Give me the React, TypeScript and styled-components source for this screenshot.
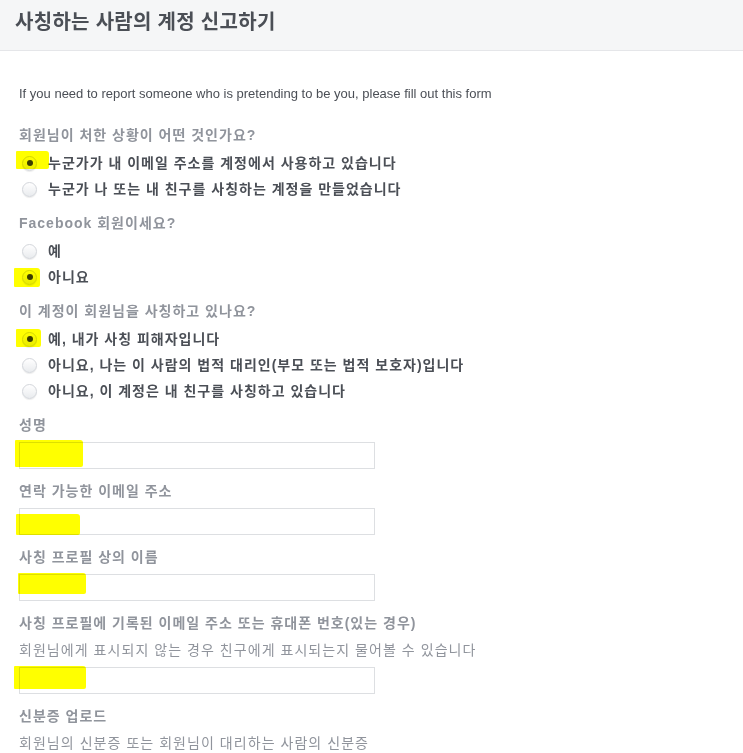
import React from 'react';
import styled, { createGlobalStyle } from 'styled-components';

const GlobalStyle = createGlobalStyle`
    html, body {
        margin: 0;
        padding: 0;
        background: #ffffff;
    }
    body {
        font-family: "Liberation Sans", "Noto Sans CJK KR", sans-serif;
        color: #4b4f56;
    }
`;

type Mark = { left: number; top: number; width: number; height: number };

type Choice = { text: string; checked?: boolean; mark?: Mark };

type Question = { title: string; choices: Choice[] };

type Field = { label: string; hint?: string; mark?: Mark };

const questions: Question[] = [
    {
        title: '회원님이 처한 상황이 어떤 것인가요?',
        choices: [
            { text: '누군가가 내 이메일 주소를 계정에서 사용하고 있습니다', checked: true, mark: { left: -3, top: 1, width: 33, height: 18 } },
            { text: '누군가 나 또는 내 친구를 사칭하는 계정을 만들었습니다' },
        ],
    },
    {
        title: 'Facebook 회원이세요?',
        choices: [
            { text: '예' },
            { text: '아니요', checked: true, mark: { left: -5, top: 4, width: 26, height: 19 } },
        ],
    },
    {
        title: '이 계정이 회원님을 사칭하고 있나요?',
        choices: [
            { text: '예, 내가 사칭 피해자입니다', checked: true, mark: { left: -3, top: 3, width: 25, height: 18 } },
            { text: '아니요, 나는 이 사람의 법적 대리인(부모 또는 법적 보호자)입니다' },
            { text: '아니요, 이 계정은 내 친구를 사칭하고 있습니다' },
        ],
    },
];

const fields: Field[] = [
    { label: '성명', mark: { left: -4, top: -2, width: 68, height: 27 } },
    { label: '연락 가능한 이메일 주소', mark: { left: -3, top: 6, width: 64, height: 21 } },
    { label: '사칭 프로필 상의 이름', mark: { left: -1, top: -1, width: 68, height: 21 } },
    {
        label: '사칭 프로필에 기록된 이메일 주소 또는 휴대폰 번호(있는 경우)',
        hint: '회원님에게 표시되지 않는 경우 친구에게 표시되는지 물어볼 수 있습니다',
        mark: { left: -5, top: -1, width: 72, height: 23 },
    },
];

const Highlight = ({ mark }: { mark?: Mark }) =>
    mark ? <Marker $left={mark.left} $top={mark.top} $width={mark.width} $height={mark.height} /> : null;

export default function App() {
    return (
        <Page>
            <GlobalStyle />
            <Header>
                <Title>사칭하는 사람의 계정 신고하기</Title>
            </Header>
            <Body>
                <Intro>If you need to report someone who is pretending to be you, please fill out this form</Intro>
                {questions.map((q) => (
                    <Group key={q.title}>
                        <Label>{q.title}</Label>
                        <Options>
                            {q.choices.map((c) => (
                                <OptionRow key={c.text}>
                                    <Radio $checked={!!c.checked} />
                                    <OptionText>{c.text}</OptionText>
                                    <Highlight mark={c.mark} />
                                </OptionRow>
                            ))}
                        </Options>
                    </Group>
                ))}
                {fields.map((f) => (
                    <FieldBlock key={f.label}>
                        <Label>{f.label}</Label>
                        {f.hint && <Hint>{f.hint}</Hint>}
                        <InputWrap>
                            <TextInput type="text" />
                            <Highlight mark={f.mark} />
                        </InputWrap>
                    </FieldBlock>
                ))}
                <FieldBlock>
                    <Label>신분증 업로드</Label>
                    <Hint>회원님의 신분증 또는 회원님이 대리하는 사람의 신분증</Hint>
                </FieldBlock>
            </Body>
        </Page>
    );
}

const Page = styled.div`
    width: 743px;
    min-height: 753px;
    overflow: hidden;
`;

const Header = styled.header`
    height: 51px;
    box-sizing: border-box;
    padding: 8px 0 0 15px;
    background: #f5f6f7;
    border-bottom: 1px solid #e5e6e9;
`;

const Title = styled.h1`
    margin: 0;
    font-size: 20px;
    line-height: 28px;
    font-weight: 700;
    color: #4b4f56;
    letter-spacing: 0.3px;
`;

const Body = styled.main`
    display: flex;
    flex-direction: column;
    padding: 35px 0 0 19px;
`;

const Intro = styled.p`
    margin: 0 0 23px;
    font-size: 13px;
    line-height: 16px;
    color: #4b4f56;
`;

const Group = styled.section`
    display: flex;
    flex-direction: column;
    gap: 5px;
    margin-bottom: 11px;
`;

const Label = styled.div`
    font-size: 14px;
    line-height: 20px;
    font-weight: 700;
    color: #90949c;
    letter-spacing: 1px;
`;

const Hint = styled.div`
    font-size: 14px;
    line-height: 20px;
    color: #90949c;
    letter-spacing: 1.05px;
`;

const Options = styled.div`
    display: flex;
    flex-direction: column;
`;

const OptionRow = styled.label`
    position: relative;
    display: flex;
    align-items: center;
    gap: 11px;
    height: 26px;
    padding-left: 3px;
`;

const Radio = styled.span<{ $checked: boolean }>`
    position: relative;
    flex: none;
    width: 15px;
    height: 15px;
    box-sizing: border-box;
    border-radius: 50%;
    border: 1px solid #d3d6db;
    background: linear-gradient(#ffffff, #e9ebee);
    box-shadow: 0 1px 1px rgba(0, 0, 0, 0.08);

    &::after {
        content: '';
        display: ${(p) => (p.$checked ? 'block' : 'none')};
        position: absolute;
        left: 3.5px;
        top: 3.5px;
        width: 6px;
        height: 6px;
        border-radius: 50%;
        background: #3b3d40;
    }
`;

const OptionText = styled.span`
    font-size: 14px;
    line-height: 20px;
    font-weight: 700;
    color: #4b4f56;
    letter-spacing: 1px;
`;

const FieldBlock = styled.section`
    display: flex;
    flex-direction: column;
    gap: 7px;
    margin-bottom: 12px;
`;

const InputWrap = styled.div`
    position: relative;
    width: 356px;
`;

const TextInput = styled.input`
    display: block;
    width: 100%;
    height: 27px;
    box-sizing: border-box;
    margin: 0;
    border: 1px solid #dddfe2;
    background: #ffffff;
    outline: none;
`;

const Marker = styled.span<{ $left: number; $top: number; $width: number; $height: number }>`
    position: absolute;
    left: ${(p) => p.$left}px;
    top: ${(p) => p.$top}px;
    width: ${(p) => p.$width}px;
    height: ${(p) => p.$height}px;
    background: #ffff00;
    mix-blend-mode: multiply;
    border-radius: 1px 3px 2px 1px;
    pointer-events: none;
`;
